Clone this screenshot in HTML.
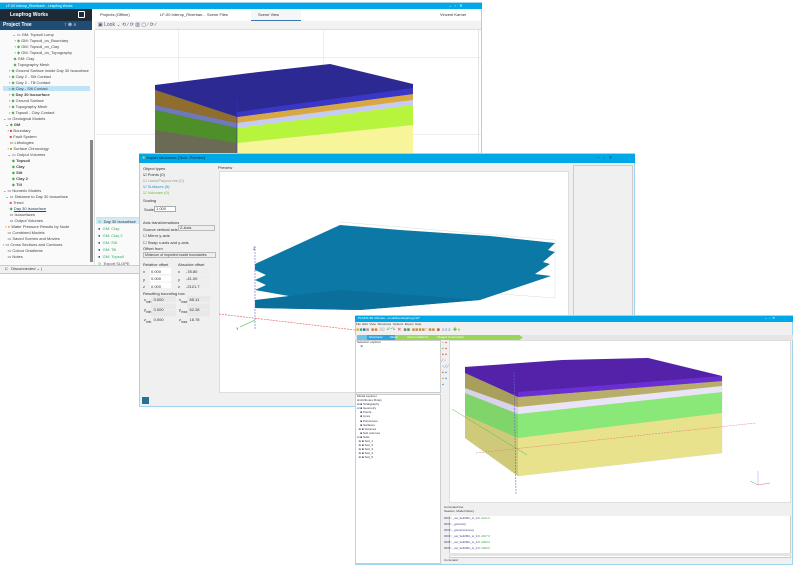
<!DOCTYPE html>
<html><head><meta charset="utf-8"><style>
*{margin:0;padding:0;box-sizing:border-box}
body{width:799px;height:565px;background:#fff;position:relative;overflow:hidden;font-family:"Liberation Sans",sans-serif;font-size:4px;color:#333}
.a{position:absolute}
.t{position:absolute;white-space:nowrap;font-size:4px;line-height:6px}
</style></head><body>

<!-- WINDOW 1 -->
<div class="a" style="left:0;top:2px;width:482px;height:272px;background:#fff;border:1px solid #9fd3ee"></div>
<div class="a" style="left:0;top:3px;width:482px;height:6px;background:#00a8e8"></div>
<div class="t" style="left:6px;top:3px;color:#fff;font-size:3.5px">LF-00 Interop_Riverbank - Leapfrog Works</div>
<div class="t" style="left:449px;top:3px;color:#fff;font-size:4px">–&nbsp;&nbsp;&nbsp;▫&nbsp;&nbsp;&nbsp;✕</div>
<div class="a" style="left:0;top:9px;width:92px;height:12px;background:#1d2a36"></div>
<div class="t" style="left:10px;top:12px;color:#fff;font-size:5px;font-weight:bold">Leapfrog Works</div>
<div class="a" style="left:78px;top:11px;width:7px;height:7px;border:1px solid #fff;border-radius:1px"></div>
<div class="t" style="left:100px;top:12px">Projects (Offline)</div>
<div class="t" style="left:160px;top:12px">LF-00 Interop_Riverban...</div>
<div class="t" style="left:207px;top:12px">Scene Files</div>
<div class="a" style="left:251px;top:10px;width:50px;height:11px;background:#f4f6f8;border-bottom:1px solid #3b78b0"></div>
<div class="t" style="left:258px;top:12px">Scene View</div>
<div class="t" style="left:440px;top:12px">Vincent Karner</div>
<div class="a" style="left:0;top:21px;width:92px;height:9px;background:#1f4d73"></div>
<div class="t" style="left:3px;top:22px;color:#fff;font-size:5px;font-weight:bold">Project Tree</div>
<div class="t" style="left:64px;top:22px;color:#fff;font-size:5px">↑ ⊗ ⌕</div>
<div class="a" style="left:95px;top:21px;width:386px;height:9px;background:#f2f2f2;border-bottom:1px solid #ddd"></div>
<div class="t" style="left:98px;top:22px;color:#557;font-size:5px">▣ Look ⌄ ⟲ ∕ ⟳ ▥ ▢ ∕ ⟳ ∕</div>
<div class="a" style="left:0;top:30px;width:95px;height:235px;background:#fafafa;border-right:1px solid #ddd"></div>
<div class="a" style="left:90px;top:140px;width:3px;height:122px;background:#888"></div>
<div class="a" style="left:3px;top:86px;width:87px;height:5px;background:#bfe3f7"></div>
<div class="t" style="left:9px;top:32px;line-height:6px;color:#444">
&nbsp;&nbsp;&nbsp;⌄ ▭ GM: Topsoil Lump<br>&nbsp;&nbsp;&nbsp;&nbsp;&nbsp;› <span style="color:#5a5">◆</span> GM: Topsoil_on_Boundary<br>&nbsp;&nbsp;&nbsp;&nbsp;&nbsp;› <span style="color:#5a5">◆</span> GM: Topsoil_on_Clay<br>&nbsp;&nbsp;&nbsp;&nbsp;&nbsp;› <span style="color:#5a5">◆</span> GM: Topsoil_on_Topography<br>&nbsp;&nbsp;&nbsp;&nbsp;<span style="color:#5a5">◆</span> GM: Clay<br>&nbsp;&nbsp;&nbsp;&nbsp;<span style="color:#5a5">◆</span> Topography Mesh<br>› <span style="color:#5a5">◆</span> Ground Surface inside Day 30 Isosurface<br>› <span style="color:#5a5">◆</span> Clay 2 - Silt Contact<br>› <span style="color:#5a5">◆</span> Clay 2 - Till Contact<br>› <span style="color:#5a5">◆</span> Clay - Silt Contact<br>› <span style="color:#5a5">◆</span> <b>Day 30 Isosurface</b><br>› <span style="color:#5a5">◆</span> Ground Surface<br>› <span style="color:#5a5">◆</span> Topography Mesh<br>› <span style="color:#5a5">◆</span> Topsoil - Clay Contact<br></div>
<div class="t" style="left:3px;top:116px;line-height:6px;color:#444">
⌄ ▭ Geological Models<br>&nbsp;&nbsp;⌄ <span style="color:#5a5">◆</span> <b>GM</b><br>&nbsp;&nbsp;&nbsp;&nbsp;› <span style="color:#d44">■</span> Boundary<br>&nbsp;&nbsp;&nbsp;&nbsp;&nbsp;&nbsp;<span style="color:#d44">■</span> Fault System<br>&nbsp;&nbsp;&nbsp;&nbsp;&nbsp;&nbsp;▭ Lithologies<br>&nbsp;&nbsp;&nbsp;&nbsp;› <span style="color:#c90">■</span> Surface Chronology<br>&nbsp;&nbsp;&nbsp;&nbsp;⌄ ▭ Output Volumes<br>&nbsp;&nbsp;&nbsp;&nbsp;&nbsp;&nbsp;&nbsp;&nbsp;<span style="color:#4a4">◆</span> <b>Topsoil</b><br>&nbsp;&nbsp;&nbsp;&nbsp;&nbsp;&nbsp;&nbsp;&nbsp;<span style="color:#4a4">◆</span> <b>Clay</b><br>&nbsp;&nbsp;&nbsp;&nbsp;&nbsp;&nbsp;&nbsp;&nbsp;<span style="color:#4a4">◆</span> <b>Silt</b><br>&nbsp;&nbsp;&nbsp;&nbsp;&nbsp;&nbsp;&nbsp;&nbsp;<span style="color:#4a4">◆</span> <b>Clay 2</b><br>&nbsp;&nbsp;&nbsp;&nbsp;&nbsp;&nbsp;&nbsp;&nbsp;<span style="color:#4a4">◆</span> <b>Till</b><br>⌄ ▭ Numeric Models<br>&nbsp;&nbsp;⌄ ▭ Distance to Day 30 Isosurface<br>&nbsp;&nbsp;&nbsp;&nbsp;&nbsp;&nbsp;<span style="color:#e54">■</span> Trend<br>&nbsp;&nbsp;&nbsp;&nbsp;&nbsp;&nbsp;<span style="color:#5a5">◆</span> <u style="color:#246">Day 30 Isosurface</u><br>&nbsp;&nbsp;&nbsp;&nbsp;&nbsp;&nbsp;▭ Isosurfaces<br>&nbsp;&nbsp;&nbsp;&nbsp;&nbsp;&nbsp;▭ Output Volumes<br>&nbsp;&nbsp;› <span style="color:#e90">●</span> Water Pressure Results by Node<br>&nbsp;&nbsp;&nbsp;&nbsp;▭ Combined Models<br>&nbsp;&nbsp;&nbsp;&nbsp;▭ Saved Scenes and Movies<br>› ▭ Cross Sections and Contours<br>&nbsp;&nbsp;&nbsp;&nbsp;▭ Colour Gradients<br>&nbsp;&nbsp;&nbsp;&nbsp;▭ Notes</div>
<div class="a" style="left:0;top:265px;width:140px;height:8px;background:#f0f0f0;border-top:1px solid #ccc"></div>
<div class="t" style="left:5px;top:266px">C&nbsp;&nbsp;&nbsp;Disconnected ⌄ |</div>
<!-- viewport grid -->
<div class="a" style="left:96px;top:57px;width:385px;height:1px;background:#eee"></div>
<div class="a" style="left:96px;top:134px;width:385px;height:1px;background:#eee"></div>
<div class="a" style="left:178px;top:30px;width:1px;height:190px;background:#eee"></div>
<div class="a" style="left:323px;top:30px;width:1px;height:190px;background:#eee"></div>
<div class="a" style="left:478px;top:30px;width:1px;height:240px;background:#e4e4e4"></div>
<svg class="a" style="left:0;top:0" width="482" height="280">
<polygon points="155,90 237,117 237,160 155,160" fill="#6b6b55"/>
<polygon points="155,110 237,128 237,143 155,130" fill="#4e8f2a"/>
<polygon points="155,105 237,123 237,128 155,110" fill="#6f78b8"/>
<polygon points="155,90 237,117 237,123 155,105" fill="#8f6d2c"/>
<polygon points="237,117 413,90 413,160 237,160" fill="#f7f49a"/>
<polygon points="237,128 413,105 413,125 237,143" fill="#b6f43e"/>
<polygon points="237,123 413,100 413,105 237,128" fill="#c6cbf5"/>
<polygon points="237,117 413,94 413,100 237,123" fill="#d8a844"/>
<polygon points="155,85 250,73 330,64 413,84 413,94 237,117 155,90" fill="#2c2a92"/>
<polygon points="237,112 413,88 413,94 237,117" fill="#3a36c8"/>
<line x1="237" y1="100" x2="237" y2="155" stroke="#33c" stroke-width=".6"/>
</svg>
<div class="a" style="left:96px;top:217px;width:44px;height:48px;background:#fafafa;border-top:1px solid #ddd"></div>
<div class="a" style="left:96px;top:218px;width:44px;height:6px;background:#d2ebf8"></div>
<div class="t" style="left:98px;top:218px;line-height:7px;color:#3a6">⊙&nbsp;&nbsp;<span style="color:#333">Day 30 Isosurface</span><br><span style="color:#246">●</span>&nbsp;&nbsp;GM: Clay<br><span style="color:#246">●</span>&nbsp;&nbsp;GM: Clay 2<br><span style="color:#246">●</span>&nbsp;&nbsp;GM: Silt<br><span style="color:#246">●</span>&nbsp;&nbsp;GM: Till<br><span style="color:#246">●</span>&nbsp;&nbsp;GM: Topsoil<br>⊙&nbsp;&nbsp;<span style="color:#555">Export SLOPE</span></div>

<!-- WINDOW 2 -->
<div class="a" style="left:139px;top:153px;width:496px;height:254px;background:#f0f0f0;border:1px solid #9fd3ee"></div>
<div class="a" style="left:139px;top:154px;width:496px;height:9px;background:#00a8e8"></div>
<div class="t" style="left:142px;top:155px;color:#223;font-size:4px"><span style="color:#fc0">✹</span> Import structures (Tech. Preview)</div>
<div class="t" style="left:597px;top:155px;color:#234;font-size:4.5px">–&nbsp;&nbsp;&nbsp;▫&nbsp;&nbsp;&nbsp;✕</div>
<div class="t" style="left:218px;top:165px">Preview</div>
<div class="a" style="left:219px;top:171px;width:350px;height:222px;background:#fff;border:1px solid #ddd"></div>
<div class="a" style="left:573px;top:165px;width:60px;height:240px;background:#f0f0f0;border:1px solid #ccc"></div>
<div class="t" style="left:143px;top:166px;line-height:6px">Object types<br>☑ Points (0)<br><span style="color:#999">☑ Lines/Polycurves (0)</span><br><span style="color:#29c">☑ Surfaces (5)</span><br><span style="color:#7b3">☑ Volumes (0)</span></div>
<div class="t" style="left:143px;top:198px">Scaling</div>
<div class="t" style="left:144px;top:207px">Scale</div>
<div class="a" style="left:154px;top:206px;width:22px;height:6px;background:#fff;border:1px solid #aaa;font-size:4px;line-height:4px;padding-left:1px">1.000</div>
<div class="t" style="left:143px;top:220px;line-height:6.5px">Axis transformations<br>Source vertical axis<br>☐ Mirror y-axis<br>☐ Swap x-axis and y-axis<br>Offset from</div>
<div class="a" style="left:178px;top:225px;width:37px;height:6px;background:#eee;border:1px solid #bbb;font-size:4px;line-height:4px;padding-left:1px">Z-Axis</div>
<div class="a" style="left:143px;top:252px;width:73px;height:6px;background:#eee;border:1px solid #bbb;font-size:3.5px;line-height:4px;padding-left:1px">Minimum of imported model boundaries</div>
<div class="t" style="left:143px;top:261px;line-height:7.3px">Relative offset<br>x<br>y<br>z<br>Resulting bounding box</div>
<div class="t" style="left:178px;top:261px;line-height:7.3px">Absolute offset<br>x<br>y<br>z</div>
<div class="a" style="left:150px;top:268px;width:21px;height:20px;background:repeating-linear-gradient(#fff 0 6px,transparent 6px 7.3px);border:0"></div>
<div class="t" style="left:151px;top:268px;line-height:7.3px">0.000<br>0.000<br>0.000</div>
<div class="a" style="left:185px;top:268px;width:25px;height:20px;background:repeating-linear-gradient(#eee 0 6px,transparent 6px 7.3px)"></div>
<div class="t" style="left:186px;top:268px;line-height:7.3px">-78.80<br>-41.00<br>-2121.7</div>
<div class="a" style="left:151px;top:296px;width:25px;height:21px;background:repeating-linear-gradient(#e8e8e8 0 6px,transparent 6px 7.3px)"></div>
<div class="a" style="left:187px;top:296px;width:23px;height:21px;background:repeating-linear-gradient(#e8e8e8 0 6px,transparent 6px 7.3px)"></div>
<div class="t" style="left:144px;top:296px;line-height:7.3px">x<sub>min</sub>&nbsp;&nbsp;0.000<br>y<sub>min</sub>&nbsp;&nbsp;0.000<br>z<sub>min</sub>&nbsp;&nbsp;0.000</div>
<div class="t" style="left:179px;top:296px;line-height:7.3px">x<sub>max</sub>&nbsp;&nbsp;85.11<br>y<sub>max</sub>&nbsp;&nbsp;62.28<br>z<sub>max</sub>&nbsp;&nbsp;18.78</div>
<div class="a" style="left:142px;top:397px;width:7px;height:7px;background:#2a6f96"></div>
<svg class="a" style="left:0;top:0" width="640" height="410">
<polyline points="340,222 555,240 555,298 340,282" fill="none" stroke="#ddd" stroke-width=".5"/>
<line x1="219" y1="314" x2="355" y2="330" stroke="#d55" stroke-width=".6" stroke-dasharray="2,1"/>
<line x1="255" y1="320" x2="240" y2="327" stroke="#4b4" stroke-width=".6"/>
<polygon points="255,264 340,225 400,230 490,236 555,243 548,250 555,252 543,262 550,264 535,274 551,276 480,300 360,310 255,308 300,298 255,290 266,285 255,280 266,275 255,270" fill="#0b78a6"/>
<polygon points="255,300 340,290 480,300 360,310 255,308" fill="#0a6f9a"/>
<line x1="255" y1="246" x2="255" y2="330" stroke="#66c" stroke-width=".6" stroke-dasharray="2,1"/>
<text x="253" y="250" font-size="4" fill="#333" font-family="Liberation Sans">Z</text>
<text x="236" y="330" font-size="4" fill="#333" font-family="Liberation Sans">Y</text>
</svg>

<!-- WINDOW 3 -->
<div class="a" style="left:355px;top:315px;width:438px;height:250px;background:#f0f0f0;border:1px solid #9fd3ee"></div>
<div class="a" style="left:355px;top:316px;width:438px;height:6px;background:#00a8e8"></div>
<div class="t" style="left:358px;top:316px;color:#fff;font-size:3px;line-height:5px">PLAXIS 3D Ultimate - modelfromleapfrog.p3d*</div>
<div class="t" style="left:765px;top:316px;color:#fff;font-size:3.5px;line-height:5px">–&nbsp;&nbsp;▫&nbsp;&nbsp;✕</div>
<div class="t" style="left:356px;top:322px;font-size:3px;line-height:5px">File&nbsp;&nbsp;Edit&nbsp;&nbsp;View&nbsp;&nbsp;Structures&nbsp;&nbsp;Options&nbsp;&nbsp;Expert&nbsp;&nbsp;Help</div>
<div class="t" style="left:356px;top:327px;font-size:5px;line-height:7px;letter-spacing:.3px"><span style="color:#e8b030">■</span><span style="color:#3a8">■</span><span style="color:#36a">■</span><span style="color:#999">■</span> <span style="color:#d73">■■</span> <span style="color:#aaa">∂∂</span> <span style="color:#4a4">↶↷</span> <span style="color:#d33">✕</span> <span style="color:#586">■■</span> <span style="color:#c83">■■■■</span><span style="color:#aaa">□</span><span style="color:#c83">■■</span> <span style="color:#c44">■</span> <span style="color:#57a">⌕⌕⌕</span> <span style="color:#3b3">✚</span><span style="color:#eb3">●</span></div>
<div class="a" style="left:355px;top:335px;width:438px;height:5px;background:#e6e6e6"></div>
<div class="a" style="left:357px;top:335px;width:10px;height:5px;background:#6bc4ee"></div>
<div class="a" style="left:367px;top:335px;width:28px;height:5px;background:#2ea3e0"></div>
<div class="a" style="left:395px;top:335px;width:128px;height:5px;background:#9bd45b;clip-path:polygon(0 0,97% 0,100% 50%,97% 100%,0 100%)"></div>
<div class="t" style="left:369px;top:335px;font-size:3px;line-height:5px;color:#fff">Structures&nbsp;&nbsp;&nbsp;&nbsp;&nbsp;&nbsp;&nbsp;&nbsp;&nbsp;Mesh&nbsp;&nbsp;&nbsp;&nbsp;&nbsp;&nbsp;&nbsp;&nbsp;&nbsp;&nbsp;&nbsp;&nbsp;Flow conditions&nbsp;&nbsp;&nbsp;&nbsp;&nbsp;&nbsp;&nbsp;&nbsp;&nbsp;&nbsp;&nbsp;Staged construction</div>
<div class="a" style="left:355px;top:340px;width:86px;height:53px;background:#fff;border:1px solid #ccc"></div>
<div class="t" style="left:357px;top:340px;font-size:3px;line-height:4px">Selection explorer<br>&nbsp;&nbsp;&nbsp;&nbsp;<span style="color:#246">⊕</span></div>
<div class="a" style="left:355px;top:394px;width:86px;height:170px;background:#fff;border:1px solid #ccc"></div>
<div class="t" style="left:357px;top:394px;font-size:3px;line-height:4.1px;color:#334">Model explorer<br>⊞ Attributes library<br>⊞ <span style="color:#246">■</span> Stratigraphy<br>⊟ <span style="color:#246">■</span> Geometry<br>&nbsp;&nbsp;&nbsp;&nbsp;<span style="color:#246">■</span> Points<br>&nbsp;&nbsp;&nbsp;&nbsp;<span style="color:#246">■</span> Lines<br>&nbsp;&nbsp;&nbsp;&nbsp;<span style="color:#246">■</span> Polycurves<br>&nbsp;&nbsp;&nbsp;&nbsp;<span style="color:#246">■</span> Surfaces<br>&nbsp;&nbsp;⊞ <span style="color:#246">■</span> Volumes<br>&nbsp;&nbsp;&nbsp;&nbsp;<span style="color:#246">■</span> Soil volumes<br>⊟ <span style="color:#246">■</span> Soils<br>&nbsp;&nbsp;⊞ <span style="color:#246">■</span> Soil_1<br>&nbsp;&nbsp;⊞ <span style="color:#246">■</span> Soil_2<br>&nbsp;&nbsp;⊞ <span style="color:#246">■</span> Soil_3<br>&nbsp;&nbsp;⊞ <span style="color:#246">■</span> Soil_4<br>&nbsp;&nbsp;⊞ <span style="color:#246">■</span> Soil_5</div>
<div class="t" style="left:442px;top:340px;font-size:5px;line-height:6px;width:7px;white-space:normal"><span style="color:#999">▫</span> <span style="color:#c44">▪</span> <span style="color:#9a3">▪</span> <span style="color:#c44">▪</span> <span style="color:#c44">▪</span> <span style="color:#c44">•</span> <span style="color:#a55">∕</span> <span style="color:#777">▫</span> <span style="color:#777">▫</span> <span style="color:#38c">∕</span> <span style="color:#38c">∕</span> <span style="color:#c44">▪</span> <span style="color:#38c">▪</span> <span style="color:#9a3">▪</span> <span style="color:#38c">▪</span> <span style="color:#38c">▪</span></div>
<div class="a" style="left:449px;top:340px;width:342px;height:163px;background:#fff;border:1px solid #ddd"></div>
<svg class="a" style="left:0;top:0" width="799" height="565">
<polyline points="465,367 648,358 722,376 722,453 518,476 465,438" fill="none" stroke="#ddd" stroke-width=".5"/>
<polygon points="465,373 518,397 518,476 465,438" fill="#cfca7a"/>
<polygon points="465,393 518,414 518,438 465,415" fill="#7fd46a"/>
<polygon points="465,388 518,407 518,414 465,393" fill="#d8d2ea"/>
<polygon points="465,373 518,397 518,407 465,388" fill="#a89f5c"/>
<polygon points="518,397 722,381 722,453 518,476" fill="#e7e28b"/>
<polygon points="518,414 722,392 722,413 518,438" fill="#8ae878"/>
<polygon points="518,407 722,386 722,392 518,414" fill="#e9e4f8"/>
<polygon points="518,397 722,381 722,386 518,407" fill="#b8ae6a"/>
<polygon points="465,367 562,360 648,358 722,376 722,381 518,397 465,373" fill="#5322a8"/>
<polygon points="518,392 722,376 722,381 518,397" fill="#6a2fd0"/>
<line x1="476" y1="389" x2="722" y2="423" stroke="none"/>
<line x1="476" y1="453" x2="756" y2="423" stroke="#e77" stroke-width=".5" stroke-dasharray="2,1"/>
<line x1="452" y1="409" x2="527" y2="455" stroke="#5b5" stroke-width=".5"/>
<line x1="514" y1="372" x2="516" y2="495" stroke="#66c" stroke-width=".6" stroke-dasharray="2,1"/>
<line x1="758" y1="485" x2="758" y2="471" stroke="#99f" stroke-width=".5"/>
<line x1="758" y1="485" x2="770" y2="483" stroke="#e66" stroke-width=".5"/>
<line x1="758" y1="485" x2="750" y2="481" stroke="#5b5" stroke-width=".5"/>
</svg>
<div class="a" style="left:449px;top:505px;width:342px;height:53px;background:#fff;border:1px solid #ccc"></div>
<div class="a" style="left:449px;top:505px;width:342px;height:11px;background:#f0f0f0"></div>
<div class="t" style="left:444px;top:505px;font-size:3px;line-height:4px">Command line<br>Session&nbsp;&nbsp;Model history</div>
<div class="t" style="left:444px;top:516px;font-size:2.8px;line-height:5.9px;color:#448">0001&gt; _set_SoilZMin_to_0.0 <span style="color:#3a3">-2121.0</span><br>0002&gt; _gotosoil()<br>0003&gt; _gotostructures()<br>0004&gt; _set_SoilZMin_to_0.0 <span style="color:#3a3">-2107.0</span><br>0005&gt; _set_SoilZMin_to_0.0 <span style="color:#3a3">-2094.0</span><br>0006&gt; _set_SoilZMin_to_0.0 <span style="color:#3a3">-2093.0</span></div>
<div class="a" style="left:449px;top:553px;width:342px;height:3px;background:#e4e4e4"></div>
<div class="t" style="left:444px;top:558px;font-size:3px;line-height:5px">Command</div>
</body></html>
